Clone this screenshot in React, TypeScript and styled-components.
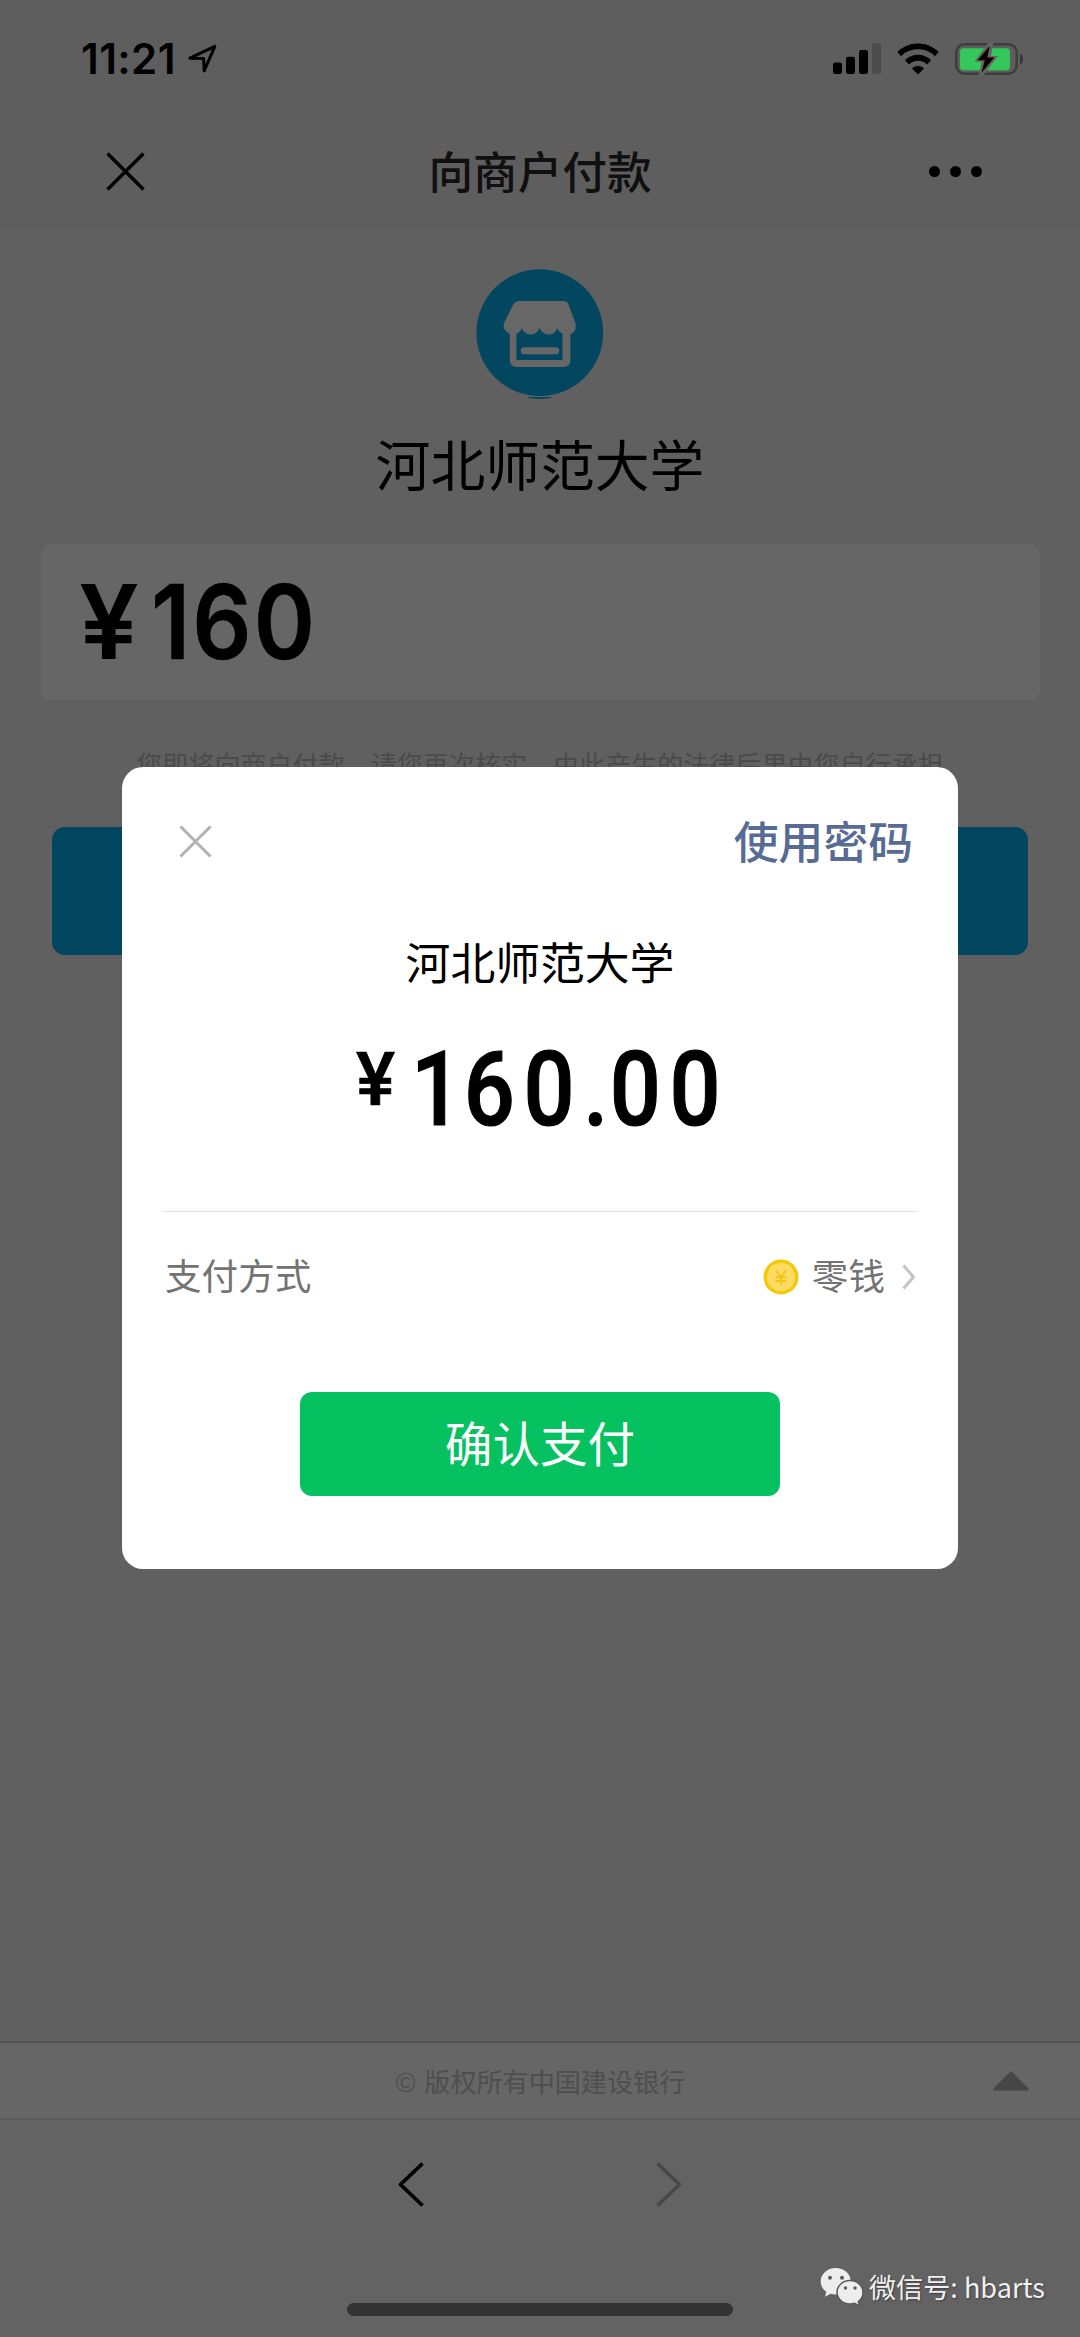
import React from "react";
import styled, { createGlobalStyle } from "styled-components";

const cjk = `"Noto Sans CJK SC", sans-serif`;

const GlobalStyle = createGlobalStyle`
  * { box-sizing: border-box; }
  html, body { margin: 0; padding: 0; background: #606060; }
  button { border: 0; padding: 0; background: none; font: inherit; display: block; }
  svg { display: block; }
`;

const Screen = styled.div`
  position: relative;
  width: 1080px;
  height: 2337px;
  overflow: hidden;
  display: flex;
  flex-direction: column;
  background: #606060;
  font-family: ${cjk};
  color: #000;
`;

const Header = styled.header`
  height: 229px;
  background: #5e5e5e;
  flex: none;
`;

const StatusBar = styled.div`
  height: 117px;
  padding: 0 57px 0 81px;
  display: flex;
  align-items: center;
  justify-content: space-between;
`;

const Clock = styled.div`
  display: flex;
  align-items: center;
  gap: 12px;
  font: 600 42px/48px Inter, sans-serif;
  letter-spacing: 0.4px;
`;

const Indicators = styled.div`
  display: flex;
  align-items: center;
  gap: 16px;
`;

const NavBar = styled.div`
  height: 109px;
  padding: 0 98px 0 106px;
  display: grid;
  grid-template-columns: 60px 1fr 60px;
  align-items: center;
`;

const Title = styled.h1`
  margin: 0;
  padding: 0 8px 3px 0;
  text-align: center;
  font-size: 44.6px;
  line-height: 60px;
  font-weight: 500;
  color: #101010;
`;

const More = styled.div`
  display: flex;
  justify-content: flex-end;
  gap: 10px;
`;

const Dot = styled.span`
  width: 11px;
  height: 11px;
  border-radius: 50%;
  background: #000;
`;

const Content = styled.main`
  flex: 1;
  display: flex;
  flex-direction: column;
  align-items: center;
  padding-top: 40px;
`;

const Merchant = styled.h2`
  margin: 23px 0 0;
  font-size: 54.8px;
  line-height: 80px;
  font-weight: 400;
`;

const AmountCard = styled.div`
  width: 999px;
  height: 156px;
  margin-top: 42px;
  padding-left: 38px;
  border-radius: 10px;
  background: #666;
  display: flex;
  align-items: center;
  font: 600 103px/120px Inter, sans-serif;
`;

const AmountSign = styled.span`
  width: 72px;
  transform: scaleX(1.03);
  transform-origin: left center;
`;

const AmountValue = styled.span`
  letter-spacing: 2.4px;
  transform: scaleX(0.9);
  transform-origin: left center;
  -webkit-text-stroke: 0.5px #000;
`;

const Notice = styled.p`
  margin: 45px 0 0;
  font-size: 26.05px;
  line-height: 38px;
  color: #4a4a4a;
  white-space: nowrap;
`;

const PayButton = styled.button`
  width: 976px;
  height: 128px;
  margin-top: 44px;
  border-radius: 13px;
  background: #03465f;
`;

const Copyright = styled.footer`
  height: 79px;
  border-top: 2px solid #535353;
  border-bottom: 2px solid #5b5b5b;
  background: #666;
  padding: 0 50px 0 50px;
  display: grid;
  grid-template-columns: 38px 1fr 38px;
  align-items: center;
  text-align: center;
  font-size: 26.1px;
  line-height: 38px;
  word-spacing: 2px;
  color: #4e4e4e;
`;

const BottomBar = styled.div`
  height: 217px;
  background: #636363;
  padding-top: 42px;
  display: flex;
  flex-direction: column;
  align-items: center;
`;

const Pager = styled.div`
  width: 284px;
  display: flex;
  justify-content: space-between;
`;

const HomeIndicator = styled.div`
  width: 386px;
  height: 13px;
  margin-top: 96px;
  border-radius: 7px;
  background: #333;
`;

const Watermark = styled.div`
  position: absolute;
  left: 820px;
  top: 2264px;
  height: 46px;
  display: flex;
  align-items: center;
  gap: 5px;
  font-size: 27.1px;
  line-height: 40px;
  color: #f0f0f0;
  white-space: nowrap;
  text-shadow: 1px 1px 2px rgba(0, 0, 0, 0.4);
`;

const Dialog = styled.section`
  position: absolute;
  left: 122px;
  top: 767px;
  width: 836px;
  height: 802px;
  border-radius: 21px;
  background: #fff;
  display: flex;
  flex-direction: column;
  align-items: center;
`;

const DialogHead = styled.div`
  width: 100%;
  height: 148px;
  padding: 0 45px 0 57px;
  display: flex;
  align-items: center;
  justify-content: space-between;
`;

const PasswordLink = styled.button`
  padding-bottom: 3px;
  font-size: 44.8px;
  line-height: 60px;
  font-weight: 500;
  color: #576b95;
`;

const Payee = styled.div`
  margin-top: 16px;
  font-size: 44.8px;
  line-height: 60px;
`;

const Price = styled.div`
  height: 120px;
  margin: 39px 0 0 234px;
  align-self: flex-start;
  display: flex;
  align-items: flex-start;
  font-family: Roboto, sans-serif;
  font-weight: 500;
`;

const Currency = styled.span`
  width: 55px;
  font-size: 73.5px;
  line-height: 86px;
  margin-top: 7px;
  -webkit-text-stroke: 0.7px #000;
`;

const Digits = styled.span`
  font-size: 104.5px;
  line-height: 120px;
  letter-spacing: 10.1px;
  transform: scaleX(0.86);
  transform-origin: left center;
  -webkit-text-stroke: 1.2px #000;
`;

const Kern = styled.span<{ $space: number }>`
  letter-spacing: ${(p) => p.$space}px;
`;

const Method = styled.div`
  width: 754px;
  height: 130px;
  margin-top: 61px;
  padding: 0 1px 0 2px;
  border-top: 1px solid #e0e0e0;
  display: flex;
  align-items: center;
  justify-content: space-between;
  font-size: 36.6px;
  line-height: 54px;
  color: #737373;
`;

const MethodLabel = styled.span`
  padding-bottom: 3px;
`;

const Source = styled.div`
  display: flex;
  align-items: center;
`;

const SourceName = styled.span`
  margin: 0 17px 0 13px;
  padding-bottom: 3px;
`;

const Confirm = styled.button`
  width: 480px;
  height: 104px;
  margin-top: 51px;
  padding-bottom: 5px;
  border-radius: 12px;
  background: #05c160;
  color: #fff;
  font-size: 47.6px;
  line-height: 99px;
`;

const LocationIcon = () => (
  <svg width="29" height="29" viewBox="0 0 29 29" fill="none" stroke="#000" strokeWidth="3" strokeLinejoin="round">
    <path d="M1.900 14.200 26.800 2.400 16.200 26.800 15.600 14.400Z" />
  </svg>
);

const SignalIcon = () => (
  <svg width="48" height="31" viewBox="0 0 48 31">
    <rect x="0" y="19.5" width="9" height="11.5" rx="2.3" />
    <rect x="13" y="13.8" width="9" height="17.2" rx="2.3" />
    <rect x="26" y="7" width="9" height="24" rx="2.3" />
    <rect x="39" y="0.3" width="9" height="30.7" rx="2.3" fill="#4c4c4c" />
  </svg>
);

const WifiIcon = () => (
  <svg width="42" height="32" viewBox="0 0 42 32">
    <path d="M21 0.5C29 .5 36.400 3.500 41.600 9.100L37.900 13.200C33.400 8.500 27.600 6.300 21 6.300S8.600 8.500 4.100 13.200L.4 9.100C5.600 3.500 13 .5 21 .5Z" />
    <path d="M21 11.800C26 11.800 30.500 13.700 34 17.200L30 21.400C27.500 18.900 24.500 17.700 21 17.700S14.500 18.900 12 21.400L8 17.200C11.500 13.700 16 11.800 21 11.800Z" />
    <path d="M21 22.900C23.600 22.900 25.600 23.800 27.200 25.300L21 31.500 14.800 25.300C16.400 23.800 18.400 22.900 21 22.900Z" />
  </svg>
);

const BatteryIcon = () => (
  <svg width="68" height="36" viewBox="0 0 68 36">
    <rect x="1.200" y="3.200" width="60.500" height="29.600" rx="8.500" fill="none" stroke="#3d3d3d" strokeWidth="2.500" />
    <path d="M65 12.500C69 14.500 69 21.500 65 23.500Z" fill="#333538" />
    <rect x="5" y="7.200" width="50" height="22" rx="3.500" fill="#34c759" />
    <path d="M33.500 1.500 19.500 20.800H26.800L23.500 34.500H28.200L42.800 15H36L38.500 1.500Z" fill="#666260" />
    <path d="M34.800 5 22.500 19.300H29.800L26.500 31.800 39.300 16.500H32.300Z" fill="#0b0000" />
  </svg>
);

const CrossIcon = ({ size, color, stroke }: { size: number; color: string; stroke: number }) => (
  <svg width={size} height={size} viewBox={`0 0 ${size} ${size}`} stroke={color} strokeWidth={stroke}>
    <path d={`M1.500 1.500 ${size - 1.5} ${size - 1.5}M${size - 1.5} 1.500 1.500 ${size - 1.5}`} />
  </svg>
);

const ShopIcon = () => (
  <svg width="128" height="130" viewBox="0 0 128 130">
    <circle cx="63.800" cy="63.700" r="63.400" fill="#03465f" />
    <path d="M52 128.500Q63.500 130.600 75 128.500Z" fill="#03465f" stroke="#03465f" strokeWidth="1" />
    <path
      fill="#676767"
      d="M43.500 32H87.500Q91 32 92.300 35L99.400 54Q101.200 62 94.400 65.300V91Q94.400 98 87.600 98H40.600Q33.800 98 33.800 91V65.300Q26 61 28 54L37.500 35Q39.500 32 43.500 32Z"
    />
    <path
      fill="#03465f"
      d="M40.400 64.500Q44 63.500 45.600 59.300Q49 65.600 54.600 65.600T63.600 59.300Q67 65.600 72.600 65.600T81.500 59.300Q83 63.500 86.500 64.500V91H40.400Z"
    />
    <rect x="44.800" y="78.300" width="38.400" height="7" rx="3.500" fill="#676767" />
  </svg>
);

const CaretUp = () => (
  <svg width="38" height="20" viewBox="0 0 38 20">
    <path d="M19 2 35 18H3Z" fill="#464646" stroke="#464646" strokeWidth="3" strokeLinejoin="round" />
  </svg>
);

const Chevron = ({ w, h, color, stroke, left }: { w: number; h: number; color: string; stroke: number; left?: boolean }) => (
  <svg width={w} height={h} viewBox={`0 0 ${w} ${h}`} fill="none" stroke={color} strokeWidth={stroke} strokeLinejoin="round">
    <path d={left ? `M${w - 1.5} 1.500 2.500 ${h / 2} ${w - 1.5} ${h - 1.5}` : `M1.500 1.500 ${w - 2.5} ${h / 2} 1.500 ${h - 1.5}`} />
  </svg>
);

const CoinIcon = () => (
  <svg width="36" height="36" viewBox="0 0 36 36">
    <circle cx="18" cy="18" r="15.900" fill="#fbdb60" stroke="#f4c806" strokeWidth="3.200" />
    <path d="M12.800 11.500 18 18.200 23.200 11.500M18 18V25.500M12.500 18.200H23.500M12.500 22H23.500" fill="none" stroke="#f3c51c" strokeWidth="1.900" />
  </svg>
);

const WechatIcon = () => (
  <svg width="44" height="40" viewBox="0 0 44 40">
    <path fill="#ededed" d="M15.700 1C7.400 1 .700 7 .700 14.500c0 4.200 2.200 7.800 5.600 10.300L5 29.700l5.600-2.900c1.600.5 3.300.7 5.100.7C24 27.500 30.700 21.700 30.700 14.300S24 1 15.700 1Z" />
    <path fill="#ededed" stroke="#5a5a5a" strokeWidth="1.500" d="M30 13.600C22.800 13.600 17 18.700 17 25.200S22.800 37 30 37c1.700 0 3.200-.3 4.600-.8l5 2.600-1.300-4.300C41.300 32.400 43 29 43 25.200 43 18.700 37.200 13.600 30 13.600Z" />
    <g fill="#5b5b5b">
      <circle cx="10" cy="10.700" r="2" />
      <circle cx="22" cy="10.700" r="2" />
      <circle cx="25.500" cy="21" r="1.700" />
      <circle cx="35" cy="21" r="1.700" />
    </g>
  </svg>
);

export default function App() {
  return (
    <Screen>
      <GlobalStyle />
      <Header>
        <StatusBar>
          <Clock>
            11:21
            <LocationIcon />
          </Clock>
          <Indicators>
            <SignalIcon />
            <WifiIcon />
            <BatteryIcon />
          </Indicators>
        </StatusBar>
        <NavBar>
          <CrossIcon size={39} color="#000" stroke={3.4} />
          <Title>向商户付款</Title>
          <More>
            <Dot />
            <Dot />
            <Dot />
          </More>
        </NavBar>
      </Header>

      <Content>
        <ShopIcon />
        <Merchant>河北师范大学</Merchant>
        <AmountCard>
          <AmountSign>¥</AmountSign>
          <AmountValue>160</AmountValue>
        </AmountCard>
        <Notice>您即将向商户付款，请您再次核实，由此产生的法律后果由您自行承担</Notice>
        <PayButton aria-label="付款" />
      </Content>

      <Copyright>
        <span />
        <span>© 版权所有中国建设银行</span>
        <CaretUp />
      </Copyright>
      <BottomBar>
        <Pager>
          <Chevron w={26} h={45} color="#000" stroke={3.8} left />
          <Chevron w={26} h={45} color="#474747" stroke={3.4} />
        </Pager>
        <HomeIndicator />
      </BottomBar>

      <Watermark>
        <WechatIcon />
        微信号: hbarts
      </Watermark>

      <Dialog>
        <DialogHead>
          <CrossIcon size={33} color="#b2b2b2" stroke={3} />
          <PasswordLink>使用密码</PasswordLink>
        </DialogHead>
        <Payee>河北师范大学</Payee>
        <Price>
          <Currency>¥</Currency>
          <Digits>
            <Kern $space={2}>1</Kern>60<Kern $space={1.7}>.</Kern>00
          </Digits>
        </Price>
        <Method>
          <MethodLabel>支付方式</MethodLabel>
          <Source>
            <CoinIcon />
            <SourceName>零钱</SourceName>
            <Chevron w={14} h={26} color="#c4c4c4" stroke={3} />
          </Source>
        </Method>
        <Confirm>确认支付</Confirm>
      </Dialog>
    </Screen>
  );
}
